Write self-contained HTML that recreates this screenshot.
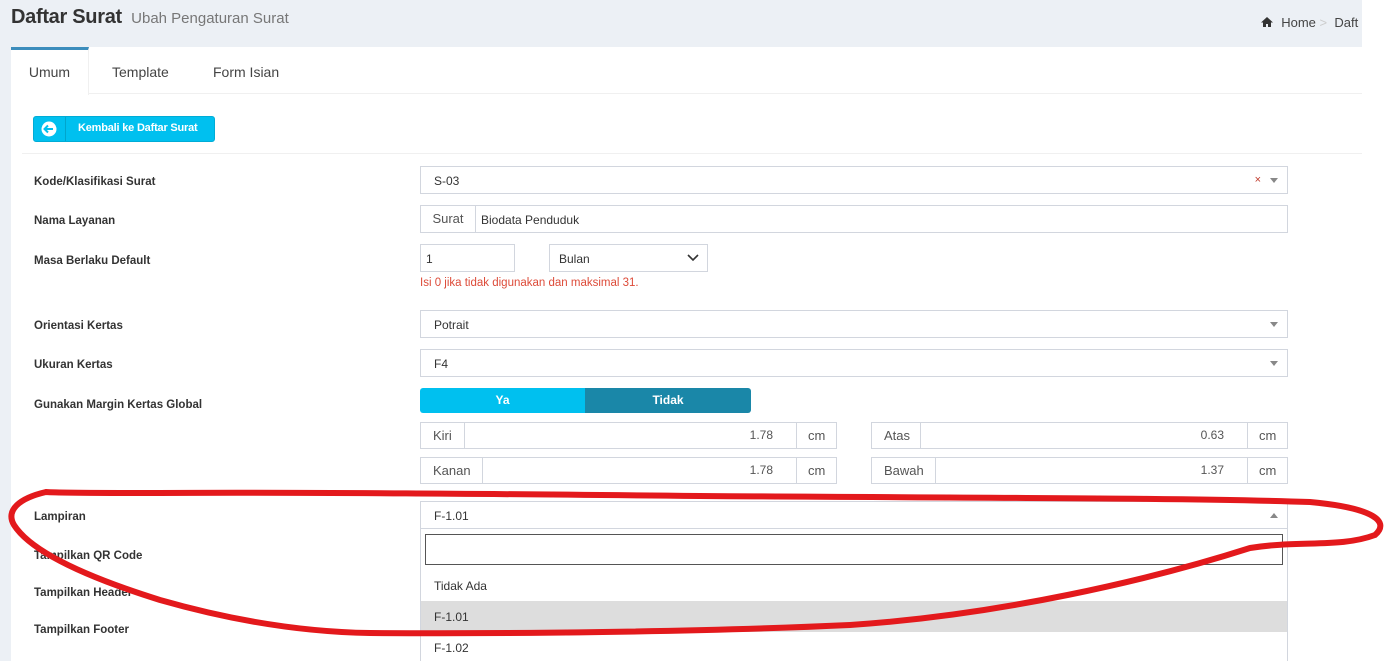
<!DOCTYPE html>
<html><head><meta charset="utf-8"><style>
*{box-sizing:border-box;margin:0;padding:0}
body{width:1390px;height:661px;overflow:hidden;background:#fff;font-family:"Liberation Sans",sans-serif;font-size:12px;color:#333;position:relative}
.gray{position:absolute;left:0;top:0;width:1362px;height:661px;background:#ecf0f5}
.title{position:absolute;left:11px;top:6px;font-size:20px;color:#333;font-weight:bold;letter-spacing:-0.3px}
.title small{font-size:15px;color:#777;margin-left:4px;font-weight:normal;letter-spacing:0}
.bc{position:absolute;left:1260px;top:15px;font-size:13px;color:#444;white-space:nowrap}
.box{position:absolute;left:11px;top:47px;width:1351px;height:614px;background:#fff}
.tabs{position:absolute;left:11px;top:47px;width:1351px;height:47px;border-bottom:1px solid #f0f0f0}
.tab{position:absolute;top:0;height:47px;line-height:50px;font-size:14px;color:#444}
.tab.act{left:0;width:78px;border-top:3px solid #3c8dbc;border-right:1px solid #f0f0f0;text-align:center;line-height:44px;height:48px;background:#fff}
.btn{position:absolute;left:33px;top:116px;width:182px;height:26px;background:#00c0ef;border:1px solid #00acd6;border-radius:3px;color:#fff;font-weight:bold;font-size:11px}
.btn .ic{position:absolute;left:0;top:0;width:32px;height:24px;border-right:1px solid #00a5cc}
.btn span{position:absolute;left:44px;top:5px;letter-spacing:-0.2px}
.hr{position:absolute;left:22px;width:1340px;border-top:1px solid #f0f0f0}
.lbl{position:absolute;left:34px;font-size:11.5px;color:#333;font-weight:bold;font-weight:600}
.inp{position:absolute;border:1px solid #d2d6de;background:#fff;font-size:12px;color:#333}
.inp .t{position:absolute;left:13px;top:7px}
.arr{position:absolute;right:9px;top:11px;width:0;height:0;border-left:4px solid transparent;border-right:4px solid transparent;border-top:5px solid #888}
.ag{position:absolute;border:1px solid #d2d6de;height:27px;background:#fff;font-size:13px;color:#555}
.ag div{position:absolute;top:0;height:25px;line-height:25px}
</style></head><body>
<div class="gray"></div>
<div class="title">Daftar Surat <small>Ubah Pengaturan Surat</small></div>
<div class="bc"><svg width="14" height="12" style="vertical-align:-1px"><path d="M7 1L1 6.5H3V11H6V8H8V11H11V6.5H13Z" fill="#333"/></svg> &nbsp;Home <span style="color:#ccc">&gt;</span> &nbsp;Daft</div>
<div class="box"></div>
<div class="tabs">
<div class="tab act">Umum</div>
<div class="tab" style="left:101px">Template</div>
<div class="tab" style="left:202px">Form Isian</div>
</div>
<div class="btn"><div class="ic"><svg width="32" height="24"><circle cx="15" cy="12" r="7.5" fill="#fff"/><path d="M19 12H11M14 8.5L10.5 12L14 15.5" stroke="#00c0ef" stroke-width="2" fill="none"/></svg></div><span>Kembali ke Daftar Surat</span></div>
<div class="hr" style="top:153px"></div>

<div class="lbl" style="top:176px">Kode/Klasifikasi Surat</div>
<div class="inp" style="left:420px;top:166px;width:868px;height:28px"><span class="t">S-03</span><span style="position:absolute;right:26px;top:7px;color:#c0392b;font-size:11px">×</span><div class="arr"></div></div>

<div class="lbl" style="top:215px">Nama Layanan</div>
<div class="inp" style="left:420px;top:205px;width:868px;height:28px"><div style="position:absolute;left:0;top:0;width:55px;height:26px;border-right:1px solid #d2d6de;text-align:center;line-height:26px;font-size:13px;color:#555">Surat</div><span class="t" style="left:60px">Biodata Penduduk</span></div>

<div class="lbl" style="top:255px">Masa Berlaku Default</div>
<div class="inp" style="left:420px;top:244px;width:95px;height:28px"><span class="t" style="left:5px">1</span></div>
<div class="inp" style="left:549px;top:244px;width:159px;height:28px"><span class="t" style="left:9px">Bulan</span><svg style="position:absolute;right:8px;top:9px" width="12" height="8"><path d="M1 1L6 6L11 1" stroke="#333" stroke-width="1.6" fill="none"/></svg></div>
<div style="position:absolute;left:420px;top:277px;color:#dd4b39;font-size:11.5px">Isi 0 jika tidak digunakan dan maksimal 31.</div>

<div class="lbl" style="top:320px">Orientasi Kertas</div>
<div class="inp" style="left:420px;top:310px;width:868px;height:28px"><span class="t">Potrait</span><div class="arr"></div></div>
<div class="lbl" style="top:359px">Ukuran Kertas</div>
<div class="inp" style="left:420px;top:349px;width:868px;height:28px"><span class="t">F4</span><div class="arr"></div></div>

<div class="lbl" style="top:399px">Gunakan Margin Kertas Global</div>
<div style="position:absolute;left:420px;top:388px;width:331px;height:25px;border-radius:3px;overflow:hidden;color:#fff;font-weight:bold;font-size:12px">
<div style="position:absolute;left:0;top:0;width:165px;height:25px;background:#00c0ef;text-align:center;line-height:24px">Ya</div>
<div style="position:absolute;left:165px;top:0;width:166px;height:25px;background:#1a87a8;text-align:center;line-height:24px">Tidak</div></div>

<div class="ag" style="left:420px;top:422px;width:417px"><div style="left:12px">Kiri</div><div style="left:43px;width:1px;background:#d2d6de"></div><div style="right:63px;font-size:12px">1.78</div><div style="left:375px;width:1px;background:#d2d6de"></div><div style="left:387px">cm</div></div>
<div class="ag" style="left:420px;top:457px;width:417px"><div style="left:12px">Kanan</div><div style="left:61px;width:1px;background:#d2d6de"></div><div style="right:63px;font-size:12px">1.78</div><div style="left:375px;width:1px;background:#d2d6de"></div><div style="left:387px">cm</div></div>
<div class="ag" style="left:871px;top:422px;width:417px"><div style="left:12px">Atas</div><div style="left:48px;width:1px;background:#d2d6de"></div><div style="right:63px;font-size:12px">0.63</div><div style="left:375px;width:1px;background:#d2d6de"></div><div style="left:387px">cm</div></div>
<div class="ag" style="left:871px;top:457px;width:417px"><div style="left:12px">Bawah</div><div style="left:63px;width:1px;background:#d2d6de"></div><div style="right:63px;font-size:12px">1.37</div><div style="left:375px;width:1px;background:#d2d6de"></div><div style="left:387px">cm</div></div>

<div class="lbl" style="top:511px">Lampiran</div>
<div class="lbl" style="top:550px">Tampilkan QR Code</div>
<div class="lbl" style="top:587px">Tampilkan Header</div>
<div class="lbl" style="top:624px">Tampilkan Footer</div>
<div class="inp" style="left:420px;top:501px;width:868px;height:160px;border-bottom:none">
<div style="position:absolute;left:0;top:0;width:866px;height:27px;border-bottom:1px solid #d2d6de"><span class="t">F-1.01</span><div style="position:absolute;right:9px;top:11px;border-left:4px solid transparent;border-right:4px solid transparent;border-bottom:5px solid #888"></div></div>
<div style="position:absolute;left:4px;top:32px;width:858px;height:31px;border:1px solid #555"></div>
<div style="position:absolute;left:13px;top:77px">Tidak Ada</div>
<div style="position:absolute;left:0;top:99px;width:866px;height:31px;background:#ddd"></div>
<div style="position:absolute;left:13px;top:108px">F-1.01</div>
<div style="position:absolute;left:13px;top:139px">F-1.02</div>
</div>

<svg style="position:absolute;left:0;top:0" width="1390" height="661"><path d="M46 492 C20 498 5 510 14 525 C30 550 80 575 160 600 C230 620 300 632 370 633 C500 634 700 632 850 625 C1000 615 1150 580 1250 548 C1300 540 1340 548 1375 535 C1390 522 1375 508 1310 502 C1200 498 1000 498 700 496 C500 494 300 492 150 493 C100 493 60 493 46 492" stroke="#e3191c" stroke-width="6" fill="none" stroke-linecap="round"/></svg>
</body></html>
